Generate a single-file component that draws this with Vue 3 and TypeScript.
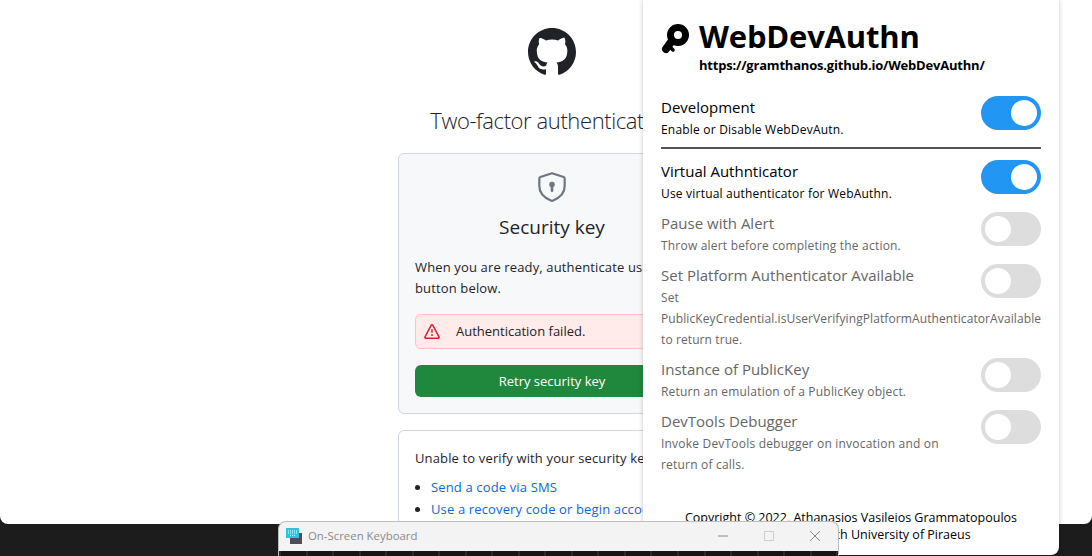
<script setup lang="ts">
interface Option {
  label: string
  desc: string
  on: boolean
  muted: boolean
  tight?: boolean
}

const first: Option = { label: 'Development', desc: 'Enable or Disable WebDevAutn.', on: true, muted: false }

const options: Option[] = [
  { label: 'Virtual Authnticator', desc: 'Use virtual authenticator for WebAuthn.', on: true, muted: false },
  { label: 'Pause with Alert', desc: 'Throw alert before completing the action.', on: false, muted: true },
  { label: 'Set Platform Authenticator Available', desc: 'Set PublicKeyCredential.isUserVerifyingPlatformAuthenticatorAvailable to return true.', on: false, muted: true, tight: true },
  { label: 'Instance of PublicKey', desc: 'Return an emulation of a PublicKey object.', on: false, muted: true },
  { label: 'DevTools Debugger', desc: 'Invoke DevTools debugger on invocation and on return of calls.', on: false, muted: true },
]

const keys = Array.from({ length: 21 }, (_, i) => i)
</script>

<template>
  <div class="desktop">
    <main class="browser">
      <div class="login">
        <svg class="mark" viewBox="0 0 16 16" aria-hidden="true">
          <path d="M8 0C3.58 0 0 3.58 0 8c0 3.54 2.29 6.53 5.47 7.59.4.07.55-.17.55-.38 0-.19-.01-.82-.01-1.49-2.01.37-2.53-.49-2.69-.94-.09-.23-.48-.94-.82-1.13-.28-.15-.68-.52-.01-.53.63-.01 1.08.58 1.23.82.72 1.21 1.87.87 2.33.66.07-.52.28-.87.51-1.07-1.78-.2-3.64-.89-3.64-3.95 0-.87.31-1.59.82-2.15-.08-.2-.36-1.02.08-2.12 0 0 .67-.21 2.2.82.64-.18 1.32-.27 2-.27.68 0 1.36.09 2 .27 1.53-1.04 2.2-.82 2.2-.82.44 1.1.16 1.92.08 2.12.51.56.82 1.27.82 2.15 0 3.07-1.87 3.75-3.65 3.95.29.25.54.73.54 1.48 0 1.07-.01 1.93-.01 2.2 0 .21.15.46.55.38A8.013 8.013 0 0016 8c0-4.42-3.58-8-8-8z" />
        </svg>
        <h1 class="page-title">Two-factor authentication</h1>

        <section class="card card-key">
          <svg class="shield" viewBox="0 0 30 32" aria-hidden="true">
            <path d="M15 2.2 26.6 6a1.6 1.6 0 0 1 1.1 1.5V15c0 7-4.6 11.8-12.1 14.7a1.7 1.7 0 0 1-1.2 0C6.900 26.800 2.300 22 2.300 15V7.500A1.600 1.600 0 0 1 3.400 6Z" fill="none" stroke="#6e7781" stroke-width="2.200" stroke-linejoin="round" />
            <circle cx="15" cy="13.500" r="2.800" fill="#6e7781" />
            <rect x="13.700" y="14" width="2.600" height="7" rx="1.200" fill="#6e7781" />
          </svg>
          <h2 class="card-title">Security key</h2>
          <p class="copy">When you are ready, authenticate using the button below.</p>
          <div class="alert">
            <svg class="alert-icon" viewBox="0 0 16 16" aria-hidden="true">
              <path d="M6.457 1.047c.659-1.234 2.427-1.234 3.086 0l6.082 11.378A1.75 1.75 0 0 1 14.082 15H1.918a1.75 1.75 0 0 1-1.543-2.575Zm1.763.707a.25.25 0 0 0-.44 0L1.698 13.132a.25.25 0 0 0 .22.368h12.164a.25.25 0 0 0 .22-.368Zm.53 3.996v2.5a.75.75 0 0 1-1.5 0v-2.5a.75.75 0 0 1 1.5 0ZM9 11a1 1 0 1 1-2 0 1 1 0 0 1 2 0Z" />
            </svg>
            <span>Authentication failed.</span>
          </div>
          <button class="retry">Retry security key</button>
        </section>

        <section class="card card-help">
          <p class="copy">Unable to verify with your security key?</p>
          <ul class="links">
            <li><a>Send a code via SMS</a></li>
            <li><a>Use a recovery code or begin account recovery</a></li>
          </ul>
        </section>
      </div>
    </main>

    <aside class="popup">
      <header class="head">
        <svg class="key" viewBox="0 0 28 30" aria-hidden="true">
          <circle cx="17" cy="11" r="7.500" fill="none" stroke="#000" stroke-width="7" />
          <path d="M10 18 5 25" stroke="#000" stroke-width="8" stroke-linecap="round" fill="none" />
          <path d="M9 23l3 3" stroke="#000" stroke-width="3.500" stroke-linecap="round" fill="none" />
        </svg>
        <div>
          <div class="brand">WebDevAuthn</div>
          <div class="url">https://gramthanos.github.io/WebDevAuthn/</div>
        </div>
      </header>

      <div class="row row-first">
        <div class="text">
          <div class="label">{{ first.label }}</div>
          <div class="desc">{{ first.desc }}</div>
        </div>
        <span class="switch on"><i></i></span>
      </div>
      <hr class="rule" />

      <div v-for="o in options" :key="o.label" class="row" :class="{ muted: o.muted }">
        <div class="text">
          <div class="label">{{ o.label }}</div>
          <div class="desc" :class="{ tight: o.tight }">{{ o.desc }}</div>
        </div>
        <span class="switch" :class="{ on: o.on }"><i></i></span>
      </div>

      <footer class="foot">
        Copyright © 2022, Athanasios Vasileios Grammatopoulos<br />
        Doing research with University of Piraeus
      </footer>
    </aside>

    <div class="osk">
      <div class="osk-bar">
        <svg class="osk-icon" viewBox="0 0 16 16" aria-hidden="true">
          <rect x="4" y="5" width="12" height="11" fill="#4a5058" />
          <rect x="0" y="0" width="13" height="10" fill="#2cc4dc" />
          <path d="M2 3h9M2 5h9M4 7.500h5" stroke="#e8fbff" stroke-width="1" stroke-dasharray="1 1" />
        </svg>
        <span class="osk-title">On-Screen Keyboard</span>
        <div class="osk-controls">
          <svg viewBox="0 0 12 12" aria-hidden="true"><path d="M1 6h10" stroke="#8a8a8a" fill="none" /></svg>
          <svg viewBox="0 0 12 12" aria-hidden="true"><rect x="1.500" y="1.500" width="9" height="9" stroke="#cfcfcf" fill="none" /></svg>
          <svg viewBox="0 0 12 12" aria-hidden="true"><path d="M1 1l10 10M11 1 1 11" stroke="#8a8a8a" fill="none" /></svg>
        </div>
      </div>
      <div class="osk-keys">
        <span v-for="k in keys" :key="k"></span>
      </div>
    </div>
  </div>
</template>

<style>
html, body {
  margin: 0;
  background: #1c1c1c;
  overflow: hidden;
}
</style>

<style scoped>
* {
  box-sizing: border-box;
}

.desktop {
  position: relative;
  width: 1092px;
  height: 556px;
  background: #1c1c1c;
  overflow: hidden;
  font-family: "Open Sans", "Noto Sans", sans-serif;
}

.browser {
  display: flex;
  justify-content: center;
  height: 524px;
  padding-left: 12px;
  background: #fff;
  border-radius: 0 0 8px 8px;
  overflow: hidden;
  color: #1f2328;
}

.login {
  display: flex;
  flex-direction: column;
  align-items: center;
  width: 308px;
  padding-top: 28px;
}

.login > * {
  flex: none;
}

.mark {
  width: 48px;
  height: 48px;
  fill: #1f2328;
}

.page-title {
  margin: 27px 0 16px;
  font-size: 22px;
  line-height: 34px;
  font-weight: 300;
  letter-spacing: -0.4px;
  white-space: nowrap;
}

.card {
  width: 100%;
  padding: 16px;
  border: 1px solid #d0d7de;
  border-radius: 6px;
  font-size: 13px;
  line-height: 21px;
  letter-spacing: 0.14px;
}

.card-key {
  display: flex;
  flex-direction: column;
  align-items: stretch;
  background: #f6f8fa;
}

.shield {
  width: 30px;
  height: 32px;
  margin: 1px auto 0;
}

.card-title {
  margin: 10px 0 16px;
  font-size: 19px;
  line-height: 28px;
  font-weight: 400;
  letter-spacing: 0;
  text-align: center;
}

.copy {
  margin: 0;
}

.alert {
  display: flex;
  align-items: center;
  height: 35px;
  margin-top: 15px;
  padding-left: 8px;
  background: #ffebe9;
  border: 1px solid #ffc1c0;
  border-radius: 6px;
  letter-spacing: 0;
}

.alert-icon {
  width: 16px;
  height: 16px;
  margin-right: 16px;
  fill: #cf222e;
}

.retry {
  height: 32px;
  margin-top: 16px;
  padding: 0;
  border: 0;
  border-radius: 6px;
  background: #1f883d;
  color: #fff;
  font: inherit;
  letter-spacing: 0;
}

.card-help {
  margin-top: 16px;
  padding-top: 17px;
  background: #fff;
}

.links {
  margin: 8px 0 0;
  padding-left: 16px;
}

.links li {
  margin-bottom: 1px;
  white-space: nowrap;
}

.links a {
  color: #0969da;
}

.popup {
  position: absolute;
  top: 0;
  left: 643px;
  width: 416px;
  height: 555px;
  padding: 18px 18px 0;
  background: #fff;
  border-radius: 0 0 8px 8px;
  box-shadow: 0 0 5px rgba(0, 0, 0, 0.22);
  color: #000;
}

.head {
  display: flex;
  align-items: flex-start;
  gap: 10px;
  margin-bottom: 21px;
}

.key {
  width: 28px;
  height: 30px;
  margin-top: 6px;
  flex: none;
}

.brand {
  font-size: 31px;
  line-height: 36px;
  font-weight: 700;
  letter-spacing: -0.2px;
}

.url {
  margin-top: 2px;
  font-size: 13px;
  line-height: 19px;
  font-weight: 700;
  letter-spacing: -0.2px;
}

.row {
  display: flex;
  justify-content: space-between;
  align-items: flex-start;
  margin-bottom: 8px;
}

.row-first {
  margin-bottom: 0;
}

.text {
  flex: none;
  width: 300px;
}

.label {
  font-size: 15px;
  line-height: 23px;
  white-space: nowrap;
}

.desc {
  font-size: 12px;
  line-height: 21px;
  letter-spacing: 0.2px;
}

.desc.tight {
  letter-spacing: 0.1px;
}

.muted {
  color: #666;
}

.switch {
  position: relative;
  flex: none;
  width: 60px;
  height: 34px;
  border-radius: 17px;
  background: #ddd;
}

.switch i {
  position: absolute;
  top: 4px;
  left: 4px;
  width: 26px;
  height: 26px;
  border-radius: 50%;
  background: #fff;
}

.switch.on {
  background: #2196f3;
}

.switch.on i {
  left: 30px;
}

.rule {
  height: 2px;
  margin: 7px 0 11px;
  border: 0;
  background: #555;
}

.foot {
  margin-top: 34px;
  font-size: 12.5px;
  line-height: 17px;
  text-align: center;
}

.osk {
  position: absolute;
  top: 521px;
  left: 278px;
  width: 561px;
  height: 35px;
  border: 1px solid #bdbdbd;
  border-bottom: 0;
  border-radius: 8px 8px 0 0;
  background: #f3f3f3;
  overflow: hidden;
}

.osk-bar {
  display: flex;
  align-items: center;
  height: 29px;
  padding: 0 0 2px 7px;
}

.osk-icon {
  width: 16px;
  height: 16px;
  margin-right: 6px;
}

.osk-title {
  font-size: 11.4px;
  color: #8a8a8a;
}

.osk-controls {
  display: flex;
  gap: 34px;
  margin-left: auto;
  padding-right: 17px;
}

.osk-controls svg {
  width: 12px;
  height: 12px;
}

.osk-keys {
  display: flex;
  gap: 2px;
  height: 6px;
  padding: 0 2px;
  background: #2a2a2a;
}

.osk-keys span {
  flex: 1;
  background: #151515;
}
</style>
